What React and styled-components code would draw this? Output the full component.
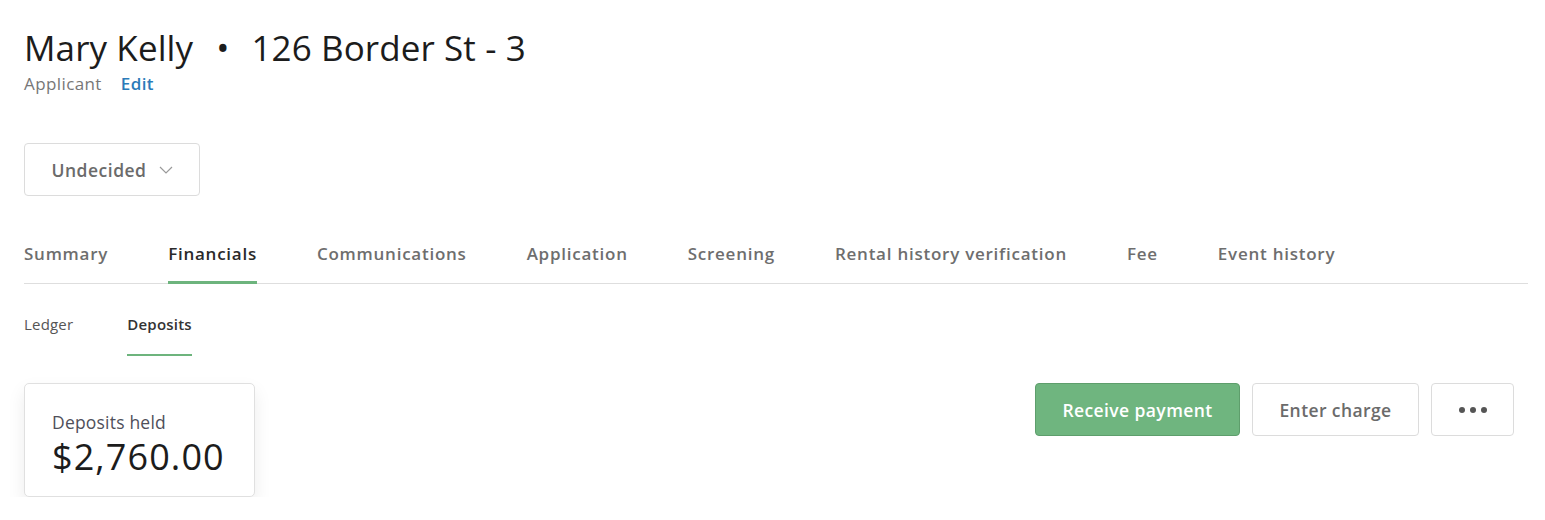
import React from 'react';
import styled, { createGlobalStyle } from 'styled-components';

const GlobalStyle = createGlobalStyle`
  body {
    margin: 0;
    background: #fff;
    font-family: "Open Sans", Lato, sans-serif;
    color: #1c1c1c;
  }
`;

const Page = styled('div')`
  box-sizing: border-box;
  padding: 25px 17px 0 24px;
`;

const Title = styled('h1')`
  margin: 0;
  font-size: 35px;
  font-weight: 400;
  line-height: 46px;
  letter-spacing: 0.1px;
  color: #1c1c1c;
  display: flex;
  align-items: center;
  .dot {
    margin: 0 22px 0 23px;
  }
`;

const Meta = styled('div')`
  display: flex;
  gap: 19px;
  margin-top: 2px;
  font-size: 17px;
  letter-spacing: 0.4px;
  line-height: 22px;
  color: #777;
  a {
    color: #2b7bb9;
    font-weight: 600;
    text-decoration: none;
  }
`;

const StatusButton = styled('button')`
  margin-top: 48px;
  box-sizing: border-box;
  height: 53px;
  width: 176px;
  display: flex;
  align-items: center;
  justify-content: center;
  gap: 12px;
  background: #fff;
  border: 1px solid #dcdcdc;
  border-radius: 4px;
  font-family: inherit;
  font-size: 17.5px;
  font-weight: 600;
  letter-spacing: 0.5px;
  color: #6b6b6b;
`;

const Tabs = styled('nav')`
  margin-top: 44px;
  display: flex;
  gap: 60px;
  border-bottom: 1px solid #dedede;
`;

const Tab = styled('a')`
  padding: 2px 0 15px;
  font-size: 17px;
  font-weight: 600;
  letter-spacing: 0.75px;
  line-height: 24px;
  color: ${p => (p.active ? '#2a2a2a' : '#6e6e6e')};
  border-bottom: 3px solid ${p => (p.active ? '#6db47d' : 'transparent')};
  margin-bottom: -1px;
  text-decoration: none;
`;

const SubTabs = styled('nav')`
  margin-top: 30px;
  display: flex;
  gap: 54px;
`;

const SubTab = styled('a')`
  padding: 0 0 20px;
  font-size: 15px;
  font-weight: ${p => (p.active ? 600 : 400)};
  letter-spacing: 0.2px;
  line-height: 20px;
  color: ${p => (p.active ? '#333' : '#555')};
  border-bottom: 2px solid ${p => (p.active ? '#6db47d' : 'transparent')};
  text-decoration: none;
`;

const Row = styled('div')`
  margin-top: 27px;
  display: flex;
  justify-content: space-between;
  align-items: flex-start;
`;

const Card = styled('div')`
  box-sizing: border-box;
  width: 231px;
  height: 114px;
  padding: 28px 27px 0;
  border: 1px solid #e0e0e0;
  border-radius: 5px;
  background: #fff;
  box-shadow: 0 8px 18px rgba(0, 0, 0, 0.08);
  .label {
    font-size: 17.5px;
    letter-spacing: 0.2px;
    line-height: 20px;
    color: #4f4f5a;
  }
  .value {
    margin-top: 7px;
    font-size: 36px;
    letter-spacing: 1.1px;
    line-height: 36px;
    color: #1c1c1c;
  }
`;

const Actions = styled('div')`
  display: flex;
  gap: 12px;
  margin-right: 14px;
`;

const Button = styled('button')`
  box-sizing: border-box;
  height: 53px;
  width: ${p => p.w}px;
  border-radius: 4px;
  font-family: inherit;
  font-size: 17.5px;
  font-weight: 600;
  letter-spacing: 0.4px;
  border: 1px solid ${p => (p.primary ? '#5e9e6c' : '#dcdcdc')};
  background: ${p => (p.primary ? '#6fb57f' : '#fff')};
  color: ${p => (p.primary ? '#fff' : '#6b6b6b')};
  display: flex;
  align-items: center;
  justify-content: center;
`;

const Chevron = () => (
  <svg width="14" height="8" viewBox="0 0 14 8" fill="none">
    <path d="M1 1l6 6 6-6" stroke="#9a9a9a" strokeWidth="1.2" />
  </svg>
);

const Dots = () => (
  <svg width="28" height="6" viewBox="0 0 28 6">
    <circle cx="3" cy="3" r="3" fill="#555" />
    <circle cx="14" cy="3" r="3" fill="#555" />
    <circle cx="25" cy="3" r="3" fill="#555" />
  </svg>
);

const tabs = [
  'Summary',
  'Financials',
  'Communications',
  'Application',
  'Screening',
  'Rental history verification',
  'Fee',
  'Event history',
];

export default function App() {
  return (
    <Page>
      <GlobalStyle />
      <Title>
        Mary Kelly<span className="dot">•</span>126 Border St - 3
      </Title>
      <Meta>
        <span>Applicant</span>
        <a href="#">Edit</a>
      </Meta>
      <StatusButton>
        Undecided <Chevron />
      </StatusButton>
      <Tabs>
        {tabs.map(t => (
          <Tab key={t} active={t === 'Financials'}>
            {t}
          </Tab>
        ))}
      </Tabs>
      <SubTabs>
        <SubTab>Ledger</SubTab>
        <SubTab active>Deposits</SubTab>
      </SubTabs>
      <Row>
        <Card>
          <div className="label">Deposits held</div>
          <div className="value">$2,760.00</div>
        </Card>
        <Actions>
          <Button primary w={205}>Receive payment</Button>
          <Button w={167}>Enter charge</Button>
          <Button w={83}>
            <Dots />
          </Button>
        </Actions>
      </Row>
    </Page>
  );
}
